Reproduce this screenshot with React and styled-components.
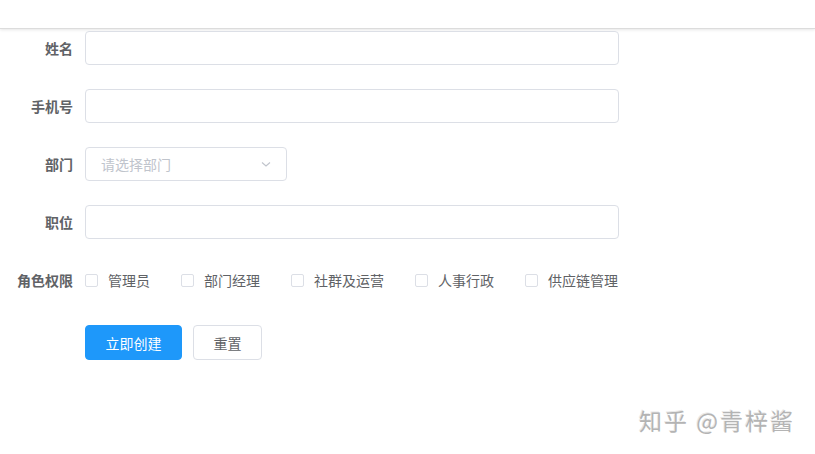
import React from "react";
import styled, { createGlobalStyle } from "styled-components";

const Global = createGlobalStyle`
  html, body { margin: 0; padding: 0; background: #fff; }
  body { font-family: "Noto Sans CJK SC", "Noto Sans", sans-serif; }
  * { box-sizing: border-box; }
`;

const Page = styled.div`
  position: relative;
  width: 815px;
  height: 454px;
  overflow: hidden;
  background: #fff;
`;

const TopBar = styled.div`
  height: 29px;
  background: #fff;
  border-bottom: 1px solid #dcdcdc;
  box-shadow: 0 1px 3px rgba(0, 0, 0, 0.1);
`;

const Form = styled.form`
  display: flex;
  flex-direction: column;
  gap: 24px;
  padding-top: 2px;
`;

const Row = styled.div`
  display: flex;
  align-items: center;
  height: ${(p) => p.$h || 34}px;
  margin-top: ${(p) => p.$mt || 0}px;
`;

const Label = styled.label`
  width: 85px;
  padding-right: 12px;
  text-align: right;
  font-size: 14px;
  font-weight: 700;
  color: #606266;
`;

const Input = styled.div`
  width: ${(p) => p.$w || 534}px;
  height: 34px;
  border: 1px solid #dcdfe6;
  border-radius: 4px;
  background: #fff;
  display: flex;
  align-items: center;
  justify-content: space-between;
  padding: 0 14px 0 15px;
`;

const Placeholder = styled.span`
  font-size: 14px;
  color: #c0c4cc;
`;

const Group = styled.div`
  display: flex;
  align-items: center;
  gap: 31px;
`;

const Check = styled.span`
  display: flex;
  align-items: center;
  gap: 10px;
  font-size: 14px;
  color: #606266;
`;

const Box = styled.span`
  width: 13px;
  height: 13px;
  border: 1px solid #dcdfe6;
  border-radius: 2px;
  background: #fff;
`;

const Buttons = styled.div`
  display: flex;
  gap: 11px;
  margin-left: 85px;
`;

const Button = styled.button`
  height: 35px;
  padding: 0;
  width: ${(p) => (p.$primary ? 97 : 69)}px;
  border-radius: 4px;
  font-family: "Noto Sans CJK SC", sans-serif;
  font-size: 14px;
  white-space: nowrap;
  cursor: pointer;
  border: 1px solid ${(p) => (p.$primary ? "#1e98fa" : "#dcdfe6")};
  background: ${(p) => (p.$primary ? "#1e98fa" : "#fff")};
  color: ${(p) => (p.$primary ? "#fff" : "#606266")};
`;

const Watermark = styled.div`
  position: absolute;
  right: 20px;
  top: 403px;
  font-size: 23px;
  letter-spacing: 2px;
  color: #b4b4b4;
  text-shadow: 1px 1px 0 rgba(255,255,255,0.9), -1px -1px 0 rgba(200,200,200,0.4);
  font-family: "Noto Sans CJK SC", sans-serif;
`;

const roles = ["管理员", "部门经理", "社群及运营", "人事行政", "供应链管理"];

export default function App() {
  return (
    <Page>
      <Global />
      <TopBar />
      <Form>
        <Row>
          <Label>姓名</Label>
          <Input />
        </Row>
        <Row>
          <Label>手机号</Label>
          <Input />
        </Row>
        <Row>
          <Label>部门</Label>
          <Input $w={202}>
            <Placeholder>请选择部门</Placeholder>
            <svg width="12" height="12" viewBox="0 0 12 12">
              <path d="M2 4.5 L6 8 L10 4.5" fill="none" stroke="#c0c4cc" strokeWidth="1.1" />
            </svg>
          </Input>
        </Row>
        <Row>
          <Label>职位</Label>
          <Input />
        </Row>
        <Row>
          <Label>角色权限</Label>
          <Group>
            {roles.map((r) => (
              <Check key={r}>
                <Box />
                {r}
              </Check>
            ))}
          </Group>
        </Row>
        <Row $h={35} $mt={4}>
          <Buttons>
            <Button type="button" $primary>立即创建</Button>
            <Button type="button">重置</Button>
          </Buttons>
        </Row>
      </Form>
      <Watermark>知乎 @青梓酱</Watermark>
    </Page>
  );
}
